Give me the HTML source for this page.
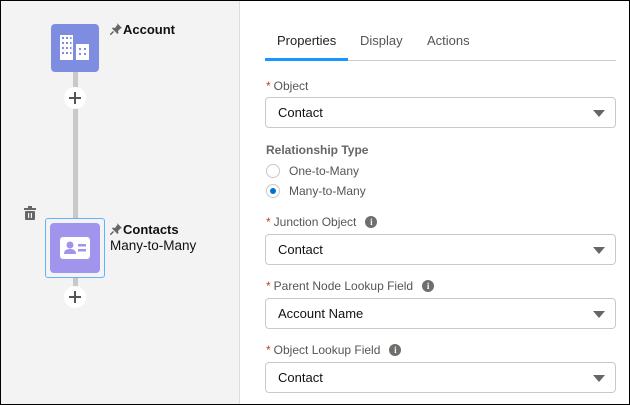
<!DOCTYPE html><html><head><style>
*{margin:0;padding:0;box-sizing:border-box}
body{width:630px;height:405px;overflow:hidden;font-family:"Liberation Sans",Arial,sans-serif;position:relative;background:#fff}
.frame{position:absolute;left:0;top:0;width:630px;height:405px;border:1px solid #000;z-index:10;pointer-events:none}
.left{position:absolute;left:0;top:0;width:240px;height:405px;background:#f3f3f3;border-right:1px solid #ddd}
.a{position:absolute}
.plus{position:absolute;width:22px;height:22px;border-radius:50%;background:#fff}
.plus:before{content:"";position:absolute;left:5px;top:10px;width:12px;height:1.5px;background:#555}
.plus:after{content:"";position:absolute;left:10.25px;top:5px;width:1.5px;height:12px;background:#555}
.lbl{position:absolute;left:266px;font-size:12px;color:#555}
.lbl b{color:#c23934;font-weight:normal;margin-right:3px}
.sel{position:absolute;left:265px;width:351px;height:31px;border:1px solid #c9c9c9;border-radius:4px;font-size:13px;color:#111;padding:7px 0 0 12px}
.sel:after{content:"";position:absolute;right:10px;top:12px;border-left:6px solid transparent;border-right:6px solid transparent;border-top:7px solid #666}
.info{display:inline-block;width:12px;height:12px;border-radius:50%;background:#706e6b;color:#fff;font-size:9px;font-weight:bold;text-align:center;line-height:12px;margin-left:9px;vertical-align:1px;font-family:"Liberation Serif",serif}
.radio{position:absolute;left:266px;width:14px;height:14px;border:1px solid #c9c9c9;border-radius:50%;background:#fff}
.rt{position:absolute;left:289px;font-size:12px;color:#555}
.pin{display:inline-block;vertical-align:-1px;margin-right:1px}
</style></head><body>
<div class="left"></div>
<div class="a" style="left:73px;top:72px;width:5px;height:226px;background:#c9c9c9"></div>
<div class="a" style="left:51px;top:24px;width:48px;height:48px;background:#7f8de1;border-radius:4px"></div>
<svg class="a" style="left:60px;top:35px" width="30" height="26" viewBox="0 0 30 26"><rect x="0" y="0" width="13" height="25" fill="#fff"/><rect x="16" y="9" width="13" height="16" fill="#fff"/><g fill="#7f8de1"><rect x="2" y="2" width="2" height="2"/><rect x="6" y="2" width="2" height="2"/><rect x="10" y="2" width="1.5" height="2"/><rect x="2" y="7" width="2" height="2"/><rect x="6" y="7" width="2" height="2"/><rect x="10" y="7" width="1.5" height="2"/><rect x="2" y="12" width="2" height="2"/><rect x="6" y="12" width="2" height="2"/><rect x="10" y="12" width="1.5" height="2"/><rect x="2" y="17" width="2" height="2"/><rect x="6" y="17" width="2" height="2"/><rect x="10" y="17" width="1.5" height="2"/><rect x="19" y="13" width="2" height="2"/><rect x="24" y="13" width="2" height="2"/><rect x="19" y="18" width="2" height="2"/><rect x="24" y="18" width="2" height="2"/></g></svg>
<div class="a" style="left:110px;top:22px;font-size:13px;font-weight:bold;color:#111"><svg class="pin" width="12" height="12" viewBox="0 0 12 12"><path d="M7 0l5 5-1.5.5-2.5 2.5.5 2-1 1-5.5-5.5 1-1 2 .5L7.5 1.5z" fill="#666"/><path d="M3.5 8.5L0 12" stroke="#666" stroke-width="1.5"/></svg>Account</div>
<div class="plus" style="left:64px;top:87px"></div>
<div class="a" style="left:45px;top:218px;width:60px;height:60px;border:1px solid #5eb4ff;border-radius:3px;background:#f3f3f3"></div>
<div class="a" style="left:50px;top:223px;width:50px;height:50px;background:#a094ed;border-radius:4px"></div>
<svg class="a" style="left:60px;top:237px" width="30" height="22" viewBox="0 0 30 22"><rect width="30" height="22" rx="3" fill="#fff"/><circle cx="10" cy="8" r="3.5" fill="#a094ed"/><path d="M4 17c0-4 3-5 6-5s6 1 6 5z" fill="#a094ed"/><rect x="18" y="7" width="8" height="2.5" fill="#a094ed"/><rect x="18" y="12" width="8" height="2.5" fill="#a094ed"/></svg>
<svg class="a" style="left:24px;top:206px" width="12" height="14" viewBox="0 0 12 14"><rect x="4" y="0" width="4" height="2" fill="#666"/><rect x="0" y="2" width="12" height="2" fill="#666"/><rect x="1" y="5" width="10" height="9" rx="1" fill="#666"/><rect x="4" y="7" width="1.2" height="5" fill="#f3f3f3"/><rect x="6.8" y="7" width="1.2" height="5" fill="#f3f3f3"/></svg>
<div class="a" style="left:110px;top:222px;font-size:13px;font-weight:bold;color:#111"><svg class="pin" width="12" height="12" viewBox="0 0 12 12"><path d="M7 0l5 5-1.5.5-2.5 2.5.5 2-1 1-5.5-5.5 1-1 2 .5L7.5 1.5z" fill="#666"/><path d="M3.5 8.5L0 12" stroke="#666" stroke-width="1.5"/></svg>Contacts</div>
<div class="a" style="left:110px;top:238px;font-size:13.5px;color:#111">Many-to-Many</div>
<div class="plus" style="left:64px;top:286px"></div>

<div class="a" style="left:277px;top:33px;font-size:13px;color:#222">Properties</div>
<div class="a" style="left:360px;top:33px;font-size:13px;color:#555">Display</div>
<div class="a" style="left:427px;top:33px;font-size:13px;color:#555">Actions</div>
<div class="a" style="left:265px;top:60px;width:351px;height:1px;background:#ccc"></div>
<div class="a" style="left:265px;top:58px;width:83px;height:3px;background:#1b96ff"></div>

<div class="lbl" style="top:79px"><b>*</b>Object</div>
<div class="sel" style="top:97px">Contact</div>
<div class="lbl" style="top:143px;font-weight:bold;color:#666">Relationship Type</div>
<div class="radio" style="top:164px"></div><div class="rt" style="top:164px">One-to-Many</div>
<div class="radio" style="top:184px"><div style="position:absolute;left:3px;top:3px;width:6px;height:6px;border-radius:50%;background:#0070d2"></div></div><div class="rt" style="top:184px">Many-to-Many</div>
<div class="lbl" style="top:215px"><b>*</b>Junction Object<span class="info">i</span></div>
<div class="sel" style="top:234px">Contact</div>
<div class="lbl" style="top:279px"><b>*</b>Parent Node Lookup Field<span class="info">i</span></div>
<div class="sel" style="top:298px">Account Name</div>
<div class="lbl" style="top:343px"><b>*</b>Object Lookup Field<span class="info">i</span></div>
<div class="sel" style="top:362px">Contact</div>
<div class="frame"></div>
</body></html>
